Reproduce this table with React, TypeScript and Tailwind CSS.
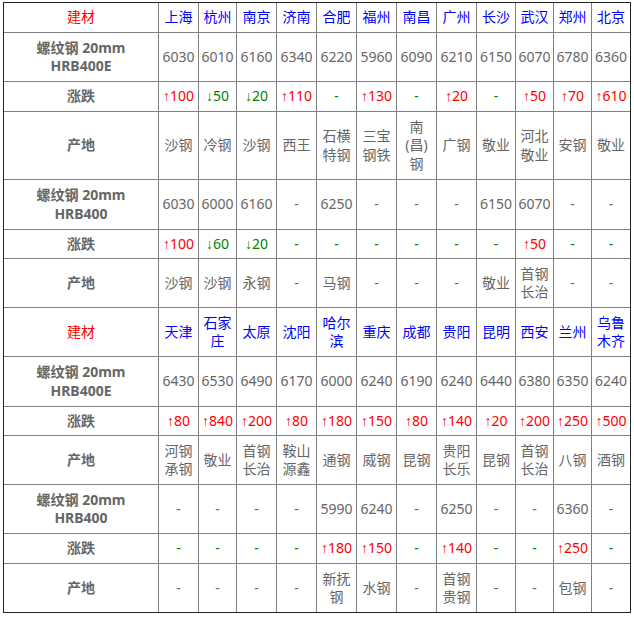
import React from "react";

const WIDTHS = [155, 40, 38, 40, 40, 40, 40, 40, 40, 39, 38, 38, 38];

type Section = {
  cities: string[];
  p1: string[];
  c1: string[];
  o1: string[];
  p2: string[];
  c2: string[];
  o2: string[];
  heights: number[];
};

const sections: Section[] = [
  {
    cities: ["上海", "杭州", "南京", "济南", "合肥", "福州", "南昌", "广州", "长沙", "武汉", "郑州", "北京"],
    p1: ["6030", "6010", "6160", "6340", "6220", "5960", "6090", "6210", "6150", "6070", "6780", "6360"],
    c1: ["↑100", "↓50", "↓20", "↑110", "-", "↑130", "-", "↑20", "-", "↑50", "↑70", "↑610"],
    o1: ["沙钢", "冷钢", "沙钢", "西王", "石横|特钢", "三宝|钢铁", "南|(昌)|钢", "广钢", "敬业", "河北|敬业", "安钢", "敬业"],
    p2: ["6030", "6000", "6160", "-", "6250", "-", "-", "-", "6150", "6070", "-", "-"],
    c2: ["↑100", "↓60", "↓20", "-", "-", "-", "-", "-", "-", "↑50", "-", "-"],
    o2: ["沙钢", "沙钢", "永钢", "-", "马钢", "-", "-", "-", "敬业", "首钢|长治", "-", "-"],
    heights: [30, 49, 30, 68, 50, 29, 49],
  },
  {
    cities: ["天津", "石家|庄", "太原", "沈阳", "哈尔|滨", "重庆", "成都", "贵阳", "昆明", "西安", "兰州", "乌鲁|木齐"],
    p1: ["6430", "6530", "6490", "6170", "6000", "6240", "6190", "6240", "6440", "6380", "6350", "6240"],
    c1: ["↑80", "↑840", "↑200", "↑80", "↑180", "↑150", "↑80", "↑140", "↑20", "↑200", "↑250", "↑500"],
    o1: ["河钢|承钢", "敬业", "首钢|长治", "鞍山|源鑫", "通钢", "威钢", "昆钢", "贵阳|长乐", "昆钢", "首钢|长治", "八钢", "酒钢"],
    p2: ["-", "-", "-", "-", "5990", "6240", "-", "6250", "-", "-", "6360", "-"],
    c2: ["-", "-", "-", "-", "↑180", "↑150", "-", "↑140", "-", "-", "↑250", "-"],
    o2: ["-", "-", "-", "-", "新抚|钢", "水钢", "-", "首钢|贵钢", "-", "-", "包钢", "-"],
    heights: [49, 50, 29, 49, 49, 30, 48],
  },
];

function Lines({ text }: { text: string }) {
  const parts = text.split("|");
  return (
    <>
      {parts.map((p, i) => (
        <React.Fragment key={i}>
          {i > 0 && <br />}
          {p}
        </React.Fragment>
      ))}
    </>
  );
}

function Change({ v }: { v: string }) {
  if (v === "-") return <span className="text-[#008000]">-</span>;
  const up = v.startsWith("↑");
  return (
    <span className={up ? "text-[#ff0000]" : "text-[#008000]"}>
      <span className="font-['Liberation_Sans',sans-serif]">{v[0]}</span>
      {v.slice(1)}
    </span>
  );
}

const cellBase =
  "p-0 text-center align-middle border-r border-b border-[#808080] last:border-r-0 whitespace-nowrap";

function Label({ children }: { children: React.ReactNode }) {
  return <td className={`${cellBase} font-bold text-[#666666]`}>{children}</td>;
}

export default function App() {
  const rows: React.ReactNode[] = [];
  let first = true;
  sections.forEach((s, si) => {
    const h = s.heights;
    rows.push(
      <tr key={`${si}-h`} style={{ height: h[0] }}>
        <td className={`${cellBase} text-[#ff0000]`} style={first ? { width: WIDTHS[0] } : undefined}>
          建材
        </td>
        {s.cities.map((c, i) => (
          <td
            key={i}
            className={`${cellBase} text-[#0000ff]`}
            style={first ? { width: WIDTHS[i + 1] } : undefined}
          >
            <Lines text={c} />
          </td>
        ))}
      </tr>
    );
    first = false;
    const block = (
      label: React.ReactNode,
      prices: string[],
      changes: string[],
      origins: string[],
      hp: number,
      hc: number,
      ho: number,
      key: string
    ) => {
      rows.push(
        <tr key={`${key}-p`} style={{ height: hp }}>
          <Label>{label}</Label>
          {prices.map((p, i) => (
            <td key={i} className={`${cellBase} text-[#666666]`}>
              {p}
            </td>
          ))}
        </tr>
      );
      rows.push(
        <tr key={`${key}-c`} style={{ height: hc }}>
          <Label>涨跌</Label>
          {changes.map((c, i) => (
            <td key={i} className={cellBase}>
              <Change v={c} />
            </td>
          ))}
        </tr>
      );
      rows.push(
        <tr key={`${key}-o`} style={{ height: ho }}>
          <Label>产地</Label>
          {origins.map((o, i) => (
            <td key={i} className={`${cellBase} text-[#666666]`}>
              <Lines text={o} />
            </td>
          ))}
        </tr>
      );
    };
    block(
      <>
        螺纹钢 20mm
        <br />
        HRB400E
      </>,
      s.p1,
      s.c1,
      s.o1,
      h[1],
      h[2],
      h[3],
      `${si}-a`
    );
    block(
      <>
        螺纹钢 20mm
        <br />
        HRB400
      </>,
      s.p2,
      s.c2,
      s.o2,
      h[4],
      h[5],
      h[6],
      `${si}-b`
    );
  });

  return (
    <div className="w-[634px] h-[617px] bg-white pl-[3px] pt-[2px]">
      <div className="w-[628px] border border-[#222222] font-['Noto_Sans','Noto_Sans_CJK_SC',sans-serif] text-[14px] leading-[18.5px]">
        <table className="table-fixed border-separate border-spacing-0 w-[626px] [&_tr:last-child>td]:border-b-0">
          <tbody>{rows}</tbody>
        </table>
      </div>
    </div>
  );
}
